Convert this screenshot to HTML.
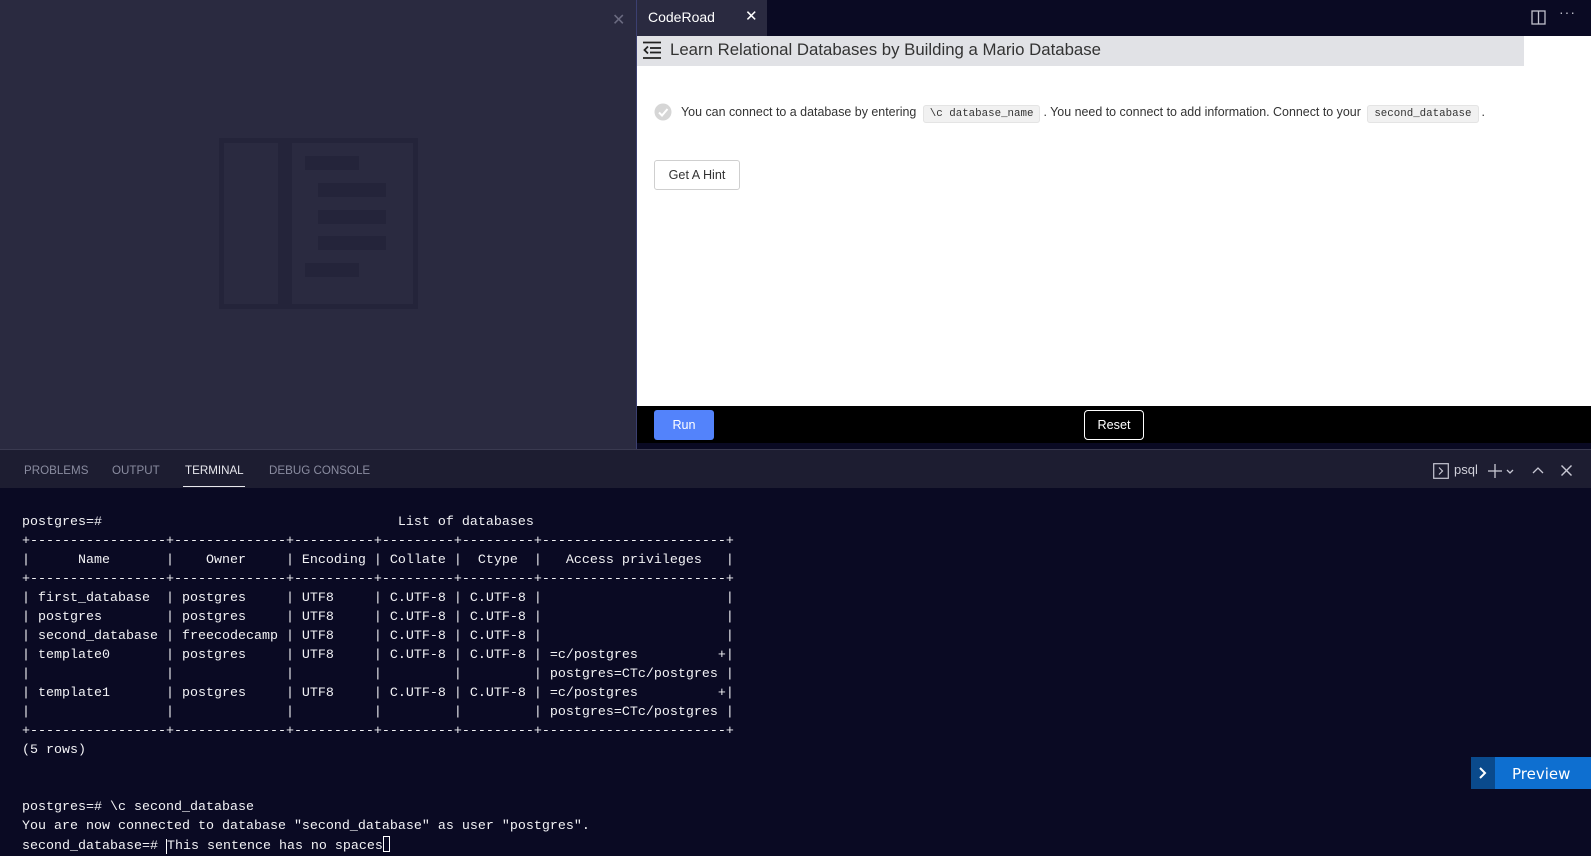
<!DOCTYPE html>
<html><head><meta charset="utf-8"><style>
*{margin:0;padding:0;box-sizing:border-box}
body{width:1591px;height:854px;overflow:hidden;background:#0a0a23;font-family:"Liberation Sans",sans-serif;position:relative}
.abs{position:absolute}
#left{left:0;top:0;width:636px;height:449px;background:#2a2a40}
#sep{left:636px;top:0;width:1px;height:449px;background:#3b3f70}
#topbar{left:637px;top:0;width:954px;height:36px;background:#0a0a23}
#tab{left:637px;top:0;width:130px;height:36px;background:#2a2a40;color:#fff;font-size:14px;line-height:34px;padding-left:11px}
#web{left:637px;top:36px;width:954px;height:370px;background:#fff}
#hdr{left:637px;top:36px;width:887px;height:30px;background:#e1e2e6;color:#333;font-size:16.8px;line-height:28px;padding-left:33px}
.txt{font-size:12.45px;color:#333;white-space:nowrap}
code{font-family:"Liberation Mono",monospace;font-size:10.8px;background:#f1f1f1;border:1px solid #e4e4e4;border-radius:3px;padding:2px 6px;margin:0 3px}
#bar{left:637px;top:406px;width:954px;height:37px;background:#000}
#panel{left:0;top:449px;width:1591px;height:39px;background:#1d1d31;border-top:1px solid #3a3a50}
.ptab{position:absolute;top:14px;font-size:11.6px;color:#8a8ca0}
#term{left:22px;top:513px;font-family:"Liberation Mono",monospace;font-size:13.33px;line-height:19px;color:#f2f2f5;white-space:pre}
</style></head><body>
<div id="left" class="abs">
  <div class="abs" style="left:612px;top:10px;color:#6a6a80;font-size:16px">✕</div>
  <div class="abs" style="left:219px;top:138px;width:199px;height:171px;border:5px solid #24243a"></div>
  <div class="abs" style="left:278px;top:140px;width:14px;height:167px;background:#24243a"></div>
  <div class="abs" style="left:305px;top:156px;width:54px;height:14px;background:#24243a"></div>
  <div class="abs" style="left:318px;top:183px;width:68px;height:14px;background:#24243a"></div>
  <div class="abs" style="left:318px;top:210px;width:68px;height:14px;background:#24243a"></div>
  <div class="abs" style="left:318px;top:236px;width:68px;height:14px;background:#24243a"></div>
  <div class="abs" style="left:305px;top:263px;width:54px;height:14px;background:#24243a"></div>
</div>
<div id="sep" class="abs"></div>
<div id="topbar" class="abs"></div>
<div id="tab" class="abs">CodeRoad<span style="position:absolute;left:108px;top:0;font-size:15px">✕</span></div>
<svg class="abs" style="left:1531px;top:10px" width="15" height="15"><rect x="1" y="1" width="13" height="13" fill="none" stroke="#c0c0cc" stroke-width="1.3"/><line x1="7.5" y1="1" x2="7.5" y2="14" stroke="#c0c0cc" stroke-width="1.3"/></svg>
<div class="abs" style="left:1559px;top:4px;color:#c0c0cc;font-size:14px;letter-spacing:1px">···</div>
<div id="web" class="abs"></div>
<div id="hdr" class="abs">Learn Relational Databases by Building a Mario Database</div>
<svg class="abs" style="left:643px;top:41px" width="19" height="18"><g stroke="#222" stroke-width="1.8" fill="none"><line x1="0" y1="1.5" x2="18" y2="1.5"/><line x1="7" y1="7" x2="18" y2="7"/><line x1="7" y1="11.5" x2="18" y2="11.5"/><line x1="0" y1="17" x2="18" y2="17"/><polyline points="5,5.5 1.5,9 5,12.5"/></g></svg>
<svg class="abs" style="left:654px;top:103px" width="18" height="18"><circle cx="9" cy="9" r="8.5" fill="#d6d6d6"/><polyline points="5,9.5 8,12.5 13.5,6" fill="none" stroke="#fff" stroke-width="2"/></svg>
<div class="abs txt" style="left:681px;top:105px">You can connect to a database by entering <code>\c database_name</code>. You need to connect to add information. Connect to your <code>second_database</code>.</div>
<div class="abs" style="left:654px;top:160px;width:86px;height:30px;border:1px solid #cfcfcf;border-radius:3px;font-size:12.6px;color:#333;text-align:center;line-height:28px">Get A Hint</div>
<div id="bar" class="abs"></div>
<div class="abs" style="left:654px;top:410px;width:60px;height:30px;background:#5383fb;border-radius:3px;color:#fff;font-size:12.6px;text-align:center;line-height:30px">Run</div>
<div class="abs" style="left:1084px;top:410px;width:60px;height:30px;border:1px solid #fff;border-radius:4px;color:#fff;font-size:12.6px;text-align:center;line-height:28px">Reset</div>
<div id="panel" class="abs">
  <span class="ptab" style="left:24px">PROBLEMS</span>
  <span class="ptab" style="left:112px">OUTPUT</span>
  <span class="ptab" style="left:185px;color:#e8e8ee">TERMINAL</span>
  <div class="abs" style="left:183px;top:36px;width:62px;height:1px;background:#e8e8ee"></div>
  <span class="ptab" style="left:269px">DEBUG CONSOLE</span>
  <svg class="abs" style="left:1433px;top:13px" width="16" height="16"><rect x="0.7" y="0.7" width="14.6" height="14.6" fill="none" stroke="#c8c8d4" stroke-width="1.2"/><polyline points="6,4.5 9.5,8 6,11.5" fill="none" stroke="#c8c8d4" stroke-width="1.2"/></svg>
  <span class="ptab" style="left:1454px;top:12px;color:#d0d0da;font-size:13px">psql</span>
  <svg class="abs" style="left:1487px;top:13px" width="30" height="16"><g stroke="#c8c8d4" stroke-width="1.3" fill="none"><line x1="8" y1="1" x2="8" y2="15"/><line x1="1" y1="8" x2="15" y2="8"/><polyline points="20,7 23,10 26,7"/></g></svg>
  <svg class="abs" style="left:1531px;top:14px" width="14" height="14"><polyline points="2,9 7,4 12,9" fill="none" stroke="#c8c8d4" stroke-width="1.3"/></svg>
  <svg class="abs" style="left:1560px;top:14px" width="13" height="13"><g stroke="#c8c8d4" stroke-width="1.4"><line x1="1.5" y1="1.5" x2="11.5" y2="11.5"/><line x1="11.5" y1="1.5" x2="1.5" y2="11.5"/></g></svg>
</div>
<div id="term" class="abs">postgres=#                                     List of databases
+-----------------+--------------+----------+---------+---------+-----------------------+
|      Name       |    Owner     | Encoding | Collate |  Ctype  |   Access privileges   |
+-----------------+--------------+----------+---------+---------+-----------------------+
| first_database  | postgres     | UTF8     | C.UTF-8 | C.UTF-8 |                       |
| postgres        | postgres     | UTF8     | C.UTF-8 | C.UTF-8 |                       |
| second_database | freecodecamp | UTF8     | C.UTF-8 | C.UTF-8 |                       |
| template0       | postgres     | UTF8     | C.UTF-8 | C.UTF-8 | =c/postgres          +|
|                 |              |          |         |         | postgres=CTc/postgres |
| template1       | postgres     | UTF8     | C.UTF-8 | C.UTF-8 | =c/postgres          +|
|                 |              |          |         |         | postgres=CTc/postgres |
+-----------------+--------------+----------+---------+---------+-----------------------+
(5 rows)


postgres=# \c second_database
You are now connected to database "second_database" as user "postgres".
second_database=# <span style="border-left:1px solid #fff">This sentence has no spaces</span><span style="display:inline-block;width:7px;height:16px;border:1px solid #fff;vertical-align:-3px"></span></div>
<div class="abs" style="left:1471px;top:757px;width:120px;height:32px;background:#0e6fd0"></div>
<div class="abs" style="left:1471px;top:757px;width:24px;height:32px;background:#0a4a8c"></div>
<svg class="abs" style="left:1477px;top:766px" width="12" height="14"><polyline points="3,2 8,7 3,12" fill="none" stroke="#fff" stroke-width="2"/></svg>
<div class="abs" style="left:1512px;top:765px;color:#fff;font-size:15px;font-family:'DejaVu Sans',sans-serif">Preview</div>
</body></html>
